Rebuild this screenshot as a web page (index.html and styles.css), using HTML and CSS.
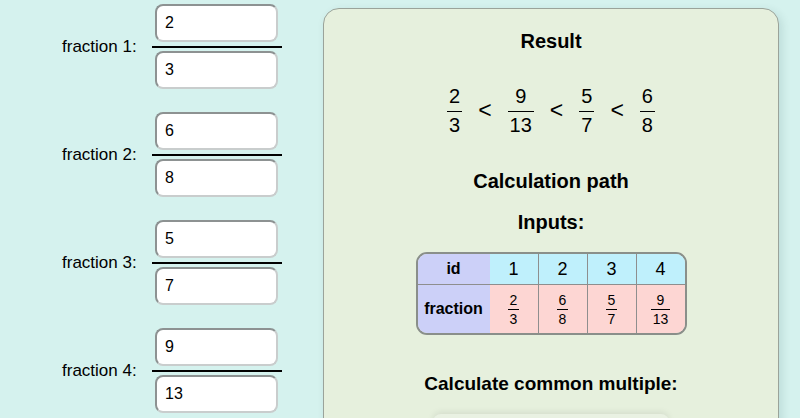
FILE: index.html
```html
<!DOCTYPE html>
<html>
<head>
<meta charset="utf-8">
<link rel="stylesheet" href="styles.css">
</head>
<body>
<div class="page">
  <div class="inputs">
    <div class="frac-group">
      <span class="label">fraction 1:</span>
      <div class="frac-input">
        <input class="num" type="text" value="2">
        <div class="bar"></div>
        <input class="num" type="text" value="3">
      </div>
    </div>
    <div class="frac-group">
      <span class="label">fraction 2:</span>
      <div class="frac-input">
        <input class="num" type="text" value="6">
        <div class="bar"></div>
        <input class="num" type="text" value="8">
      </div>
    </div>
    <div class="frac-group">
      <span class="label">fraction 3:</span>
      <div class="frac-input">
        <input class="num" type="text" value="5">
        <div class="bar"></div>
        <input class="num" type="text" value="7">
      </div>
    </div>
    <div class="frac-group">
      <span class="label">fraction 4:</span>
      <div class="frac-input">
        <input class="num" type="text" value="9">
        <div class="bar"></div>
        <input class="num" type="text" value="13">
      </div>
    </div>
  </div>
  <div class="panel">
    <h2 class="title t-result">Result</h2>
    <div class="result-row">
      <span class="frac big"><span class="n">2</span><span class="d">3</span></span>
      <span class="lt">&lt;</span>
      <span class="frac big"><span class="n">9</span><span class="d">13</span></span>
      <span class="lt">&lt;</span>
      <span class="frac big"><span class="n">5</span><span class="d">7</span></span>
      <span class="lt">&lt;</span>
      <span class="frac big"><span class="n">6</span><span class="d">8</span></span>
    </div>
    <h2 class="title t-path">Calculation path</h2>
    <h2 class="title t-inputs">Inputs:</h2>
    <table class="tbl">
      <tr class="head">
        <th class="rh">id</th>
        <td>1</td><td>2</td><td>3</td><td>4</td>
      </tr>
      <tr class="vals">
        <th class="rh">fraction</th>
        <td><span class="frac small"><span class="n">2</span><span class="d">3</span></span></td>
        <td><span class="frac small"><span class="n">6</span><span class="d">8</span></span></td>
        <td><span class="frac small"><span class="n">5</span><span class="d">7</span></span></td>
        <td><span class="frac small"><span class="n">9</span><span class="d">13</span></span></td>
      </tr>
    </table>
    <h2 class="title t-common">Calculate common multiple:</h2>
    <div class="next-box"></div>
  </div>
</div>
</body>
</html>
```

FILE: styles.css
```css
html, body {
  margin: 0;
  padding: 0;
  height: 100%;
  overflow: hidden;
}
body {
  background: #d5f2ee;
  font-family: "Liberation Sans", Arial, sans-serif;
  color: #000;
}
.page {
  display: flex;
  align-items: flex-start;
}
.inputs {
  width: 323px;
  padding-top: 4px;
  display: flex;
  flex-direction: column;
  gap: 23px;
  flex-shrink: 0;
}
.frac-group {
  display: flex;
  align-items: center;
  padding-left: 62px;
}
.label {
  width: 90px;
  font-size: 17px;
}
.frac-input {
  width: 130px;
  display: flex;
  flex-direction: column;
}
.num {
  box-sizing: border-box;
  width: 123px;
  height: 38px;
  margin-left: 3px;
  border: 2px solid;
  border-color: #8d9292 #c9cdcd #c9cdcd #8d9292;
  border-radius: 8px;
  background: #fff;
  font-family: "Liberation Sans", Arial, sans-serif;
  font-size: 16px;
  color: #000;
  padding: 0 8px;
  outline: none;
}
.bar {
  height: 2px;
  background: #000;
  margin: 4px 0 3px;
}
.panel {
  box-sizing: border-box;
  width: 456px;
  height: 430px;
  margin-top: 8px;
  border: 1px solid #9aa39a;
  border-radius: 16px;
  background: #e6f0dd;
  box-shadow: 3px 3px 10px rgba(0, 60, 60, 0.12);
  padding-top: 21px;
  display: flex;
  flex-direction: column;
  align-items: center;
  flex-shrink: 0;
}
.title {
  margin: 0;
  font-size: 20px;
  line-height: 23px;
  font-weight: bold;
  text-align: center;
}
.result-row {
  display: flex;
  align-items: center;
  margin-top: 32px;
}
.frac {
  display: inline-flex;
  flex-direction: column;
  align-items: stretch;
  text-align: center;
}
.frac .n {
  border-bottom: 1px solid #000;
}
.frac.big {
  font-size: 20px;
  line-height: 23px;
  padding: 0 1px;
}
.frac.big .n {
  padding: 0 2px 3px;
}
.frac.big .d {
  padding: 2px 2px 0;
}
.lt {
  font-size: 23px;
  line-height: 23px;
  margin: 0 15px;
  position: relative;
  top: -1px;
}
.t-path {
  margin-top: 33px;
}
.t-inputs {
  margin-top: 18px;
}
.tbl {
  margin-top: 18px;
  border-collapse: separate;
  border-spacing: 0;
  border: 2px solid #8a8f8a;
  border-radius: 11px;
  overflow: hidden;
}
.tbl th, .tbl td {
  padding: 0;
  text-align: center;
  vertical-align: middle;
}
.tbl th.rh {
  width: 72px;
  background: #ccd0f8;
  font-size: 16px;
  font-weight: bold;
}
.tbl td {
  width: 48px;
  border-left: 1px solid #8e8e8e;
}
.tbl tr.head th, .tbl tr.head td {
  height: 30px;
  border-bottom: 1px solid #8e8e8e;
}
.tbl tr.head td {
  background: #bff0fc;
  font-size: 18px;
}
.tbl tr.head td:nth-child(2), .tbl tr.vals td:nth-child(2) {
  border-left: none;
}
.tbl tr.vals th, .tbl tr.vals td {
  height: 48px;
}
.tbl tr.vals td {
  background: #fdd6d3;
}
.frac.small {
  font-size: 14px;
  line-height: 16px;
}
.frac.small .n {
  padding: 0 2px 1px;
}
.frac.small .d {
  padding: 1px 2px 0;
}
.t-common {
  margin-top: 37px;
  font-size: 19px;
}
.next-box {
  margin-top: 19px;
  width: 236px;
  height: 40px;
  background: #e9f1e2;
  border-radius: 8px;
  box-shadow: 0 -2px 6px rgba(0, 0, 0, 0.08);
}
```
